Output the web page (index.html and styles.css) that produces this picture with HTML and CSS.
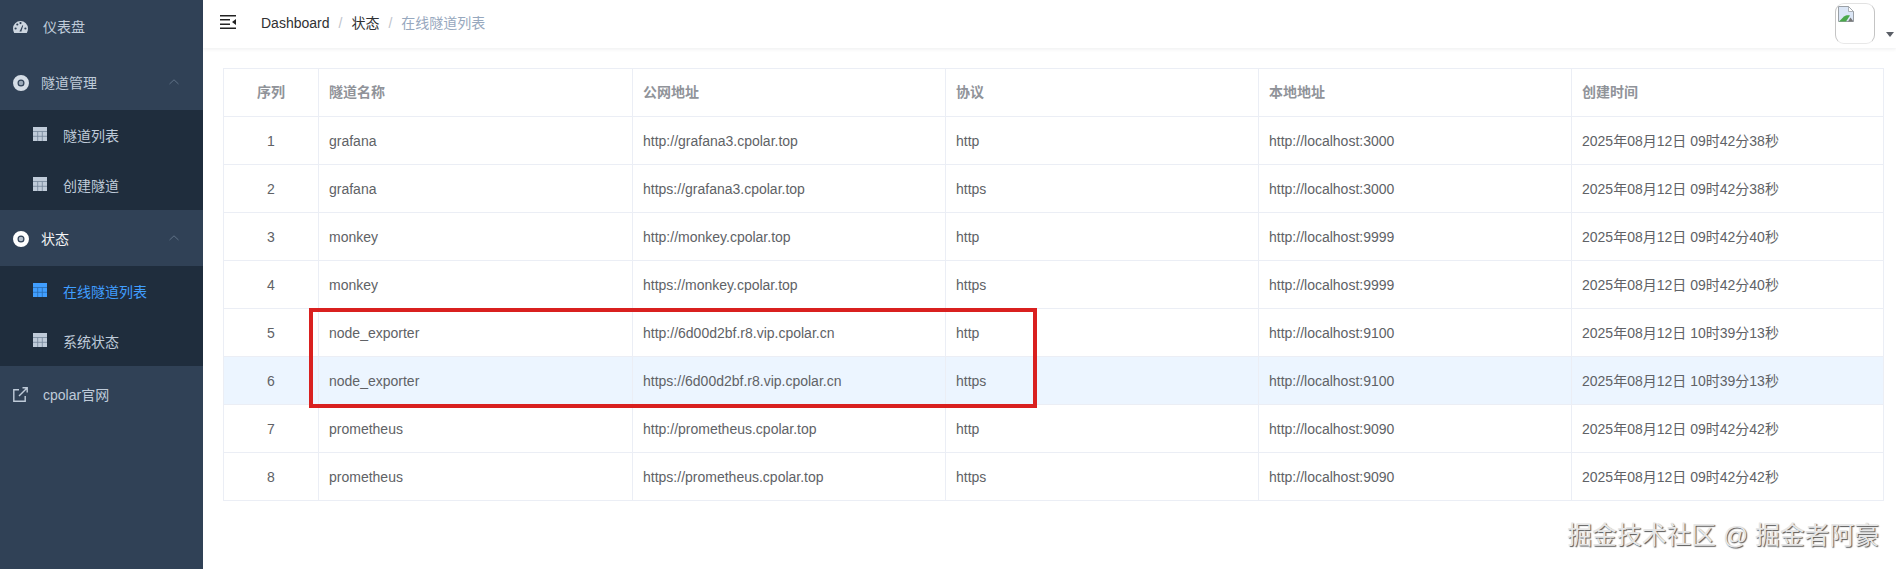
FILE: index.html
```html
<!DOCTYPE html>
<html lang="en">
<head>
    <meta charset="UTF-8">
    <meta name="viewport" content="width=device-width, initial-scale=1.0">
    <title>cpolar</title>
    <link rel="stylesheet" href="styles.css">
</head>
<body>

<div class="app">
    <aside class="sidebar">
        <a class="menu-item menu-first">
            <svg class="menu-icon" viewBox="0 0 15 12"><path fill="#cdd6e0" fill-rule="evenodd" d="M7.500 0A7.500 7.500 0 0 0 0 7.500c0 1.600.4 3.100 1.200 4.500h12.600c.8-1.400 1.200-2.900 1.200-4.500A7.500 7.500 0 0 0 7.500 0zM2.600 8.600a1.100 1.100 0 1 1 0-2.200 1.100 1.100 0 0 1 0 2.200zM4.300 4.600a1.100 1.100 0 1 1 0-2.200 1.100 1.100 0 0 1 0 2.200zM7.500 3.200a1.100 1.100 0 1 1 0-2.200 1.100 1.100 0 0 1 0 2.200zM8.500 10.500h-2c0-.7.300-1.300.8-1.600l2.100-4.700.8.300-1.500 4.800c-.1.400-.2.800-.2 1.200zM12.400 8.600a1.100 1.100 0 1 1 0-2.200 1.100 1.100 0 0 1 0 2.200z"/></svg>
            <span>仪表盘</span>
        </a>
        <a class="menu-item menu-group">
            <svg class="ring-icon" viewBox="0 0 16 16"><path fill="#d5dde6" fill-rule="evenodd" d="M8 0a8 8 0 1 0 0 16A8 8 0 0 0 8 0zM8 4.500a3.500 3.500 0 1 1 0 7 3.500 3.500 0 0 1 0-7z"/><circle cx="8" cy="8" r="2.300" fill="#9aa8b7"/></svg>
            <span>隧道管理</span>
            <svg class="arrow" viewBox="0 0 12 8"><path d="M1.500 6 6 1.800 10.500 6" fill="none" stroke="#5f7186" stroke-width="1"/></svg>
        </a>
        <div class="submenu">
            <a class="sub-item">
                <svg class="grid-icon" viewBox="0 0 14 14"><path fill="#bfcbd9" d="M0 0h14v14H0z"/><path fill="none" stroke="#75869a" stroke-width=".8" d="M0 4.500h14M0 9.300h14M4.700 4.500V14M9.300 4.500V14"/></svg>
                <span>隧道列表</span>
            </a>
            <a class="sub-item">
                <svg class="grid-icon" viewBox="0 0 14 14"><path fill="#bfcbd9" d="M0 0h14v14H0z"/><path fill="none" stroke="#75869a" stroke-width=".8" d="M0 4.500h14M0 9.300h14M4.700 4.500V14M9.300 4.500V14"/></svg>
                <span>创建隧道</span>
            </a>
        </div>
        <a class="menu-item menu-group menu-open">
            <svg class="ring-icon" viewBox="0 0 16 16"><path fill="#fff" fill-rule="evenodd" d="M8 0a8 8 0 1 0 0 16A8 8 0 0 0 8 0zM8 4.500a3.500 3.500 0 1 1 0 7 3.500 3.500 0 0 1 0-7z"/><circle cx="8" cy="8" r="2.300" fill="#b4bec9"/></svg>
            <span>状态</span>
            <svg class="arrow" viewBox="0 0 12 8"><path d="M1.500 6 6 1.800 10.500 6" fill="none" stroke="#5f7186" stroke-width="1"/></svg>
        </a>
        <div class="submenu">
            <a class="sub-item sub-active">
                <svg class="grid-icon" viewBox="0 0 14 14"><path fill="#409eff" d="M0 0h14v14H0z"/><path fill="none" stroke="#2a6cb0" stroke-width=".8" d="M0 4.500h14M0 9.300h14M4.700 4.500V14M9.300 4.500V14"/></svg>
                <span>在线隧道列表</span>
            </a>
            <a class="sub-item">
                <svg class="grid-icon" viewBox="0 0 14 14"><path fill="#bfcbd9" d="M0 0h14v14H0z"/><path fill="none" stroke="#75869a" stroke-width=".8" d="M0 4.500h14M0 9.300h14M4.700 4.500V14M9.300 4.500V14"/></svg>
                <span>系统状态</span>
            </a>
        </div>
        <a class="menu-item">
            <svg class="menu-icon link-icon" viewBox="0 0 15 15"><path fill="none" stroke="#bfcbd9" stroke-width="1.400" d="M6 2.700H.8v11.500h11.400V9M9.500.8h4.700v4.700M13.800 1.200 6 9"/></svg>
            <span>cpolar官网</span>
        </a>
    </aside>

    <div class="main">
        <header class="navbar">
            <svg class="hamburger" viewBox="0 0 16 14"><path fill="#222" d="M0 0h16v1.500H0zM0 4h10v1.500H0zM0 8.500h10V10H0zM0 12.500h16V14H0zM16 4v6l-4-3z"/></svg>
            <nav class="breadcrumb">
                <span class="crumb">Dashboard</span>
                <span class="sep">/</span>
                <span class="crumb">状态</span>
                <span class="sep">/</span>
                <span class="crumb-last">在线隧道列表</span>
            </nav>
            <div class="avatar-wrap">
                <div class="avatar">
                    <svg class="broken" viewBox="0 0 16 16">
                        <path fill="#dbe6f6" stroke="#9aa0a6" stroke-width="1" d="M.5.5h10l5 5v10H.5z"/>
                        <path fill="#fff" stroke="#9aa0a6" stroke-width=".8" d="M10.500.5v5h5z"/>
                        <path fill="#4aa84a" d="M1 15.500 6 10.500c2-1.500 4-1.500 6-1l-4 6z"/>
                        <path fill="#777" d="M12.500 11.500l3 4h-5.500z"/>
                    </svg>
                </div>
                <span class="caret"></span>
            </div>
        </header>

        <section class="content">
            <div class="table-wrap">
                <table class="tunnel-table">
                    <colgroup>
                        <col class="col-id">
                        <col class="col-name">
                        <col class="col-url">
                        <col class="col-proto">
                        <col class="col-local">
                        <col class="col-time">
                    </colgroup>
                    <thead>
                        <tr><th class="center">序列</th><th>隧道名称</th><th>公网地址</th><th>协议</th><th>本地地址</th><th>创建时间</th></tr>
                    </thead>
                    <tbody>
                        <tr><td class="center">1</td><td>grafana</td><td>http://grafana3.cpolar.top</td><td>http</td><td>http://localhost:3000</td><td>2025年08月12日 09时42分38秒</td></tr>
                        <tr><td class="center">2</td><td>grafana</td><td>https://grafana3.cpolar.top</td><td>https</td><td>http://localhost:3000</td><td>2025年08月12日 09时42分38秒</td></tr>
                        <tr><td class="center">3</td><td>monkey</td><td>http://monkey.cpolar.top</td><td>http</td><td>http://localhost:9999</td><td>2025年08月12日 09时42分40秒</td></tr>
                        <tr><td class="center">4</td><td>monkey</td><td>https://monkey.cpolar.top</td><td>https</td><td>http://localhost:9999</td><td>2025年08月12日 09时42分40秒</td></tr>
                        <tr><td class="center">5</td><td>node_exporter</td><td>http://6d00d2bf.r8.vip.cpolar.cn</td><td>http</td><td>http://localhost:9100</td><td>2025年08月12日 10时39分13秒</td></tr>
                        <tr class="row-hover"><td class="center">6</td><td>node_exporter</td><td>https://6d00d2bf.r8.vip.cpolar.cn</td><td>https</td><td>http://localhost:9100</td><td>2025年08月12日 10时39分13秒</td></tr>
                        <tr><td class="center">7</td><td>prometheus</td><td>http://prometheus.cpolar.top</td><td>http</td><td>http://localhost:9090</td><td>2025年08月12日 09时42分42秒</td></tr>
                        <tr><td class="center">8</td><td>prometheus</td><td>https://prometheus.cpolar.top</td><td>https</td><td>http://localhost:9090</td><td>2025年08月12日 09时42分42秒</td></tr>
                    </tbody>
                </table>
                <div class="red-box"></div>
            </div>
        </section>
        <div class="watermark">掘金技术社区 @ 掘金者阿豪</div>
    </div>
</div>

</body>
</html>
```
FILE: styles.css
```css
html, body {
    margin: 0;
    padding: 0;
    height: 100%;
    overflow: hidden;
}
body {
    font-family: "Liberation Sans", "Noto Sans CJK SC", sans-serif;
    font-size: 14px;
    line-height: 20px;
    color: #606266;
    background-color: #fff;
}
.app {
    display: flex;
    height: 569px;
}

/* sidebar */
.sidebar {
    width: 203px;
    flex-shrink: 0;
    background-color: #304156;
    color: #bfcbd9;
}
.menu-item {
    display: flex;
    align-items: center;
    height: 56px;
    padding-left: 13px;
    padding-top: 2px;
    box-sizing: border-box;
}
.menu-first {
    height: 54px;
    padding-top: 0;
}
.menu-icon {
    width: 15px;
    height: 12px;
    margin-right: 15px;
}
.link-icon {
    height: 15px;
    margin-top: -2px;
}
.ring-icon {
    width: 16px;
    height: 16px;
    margin-right: 12px;
}
.menu-open {
    color: #f4f4f5;
}
.arrow {
    width: 12px;
    height: 8px;
    margin-left: auto;
    margin-right: 23px;
    margin-top: -3px;
}
.submenu {
    background-color: #1f2d3d;
}
.sub-item {
    display: flex;
    align-items: center;
    height: 50px;
    padding-left: 33px;
    padding-top: 1px;
    box-sizing: border-box;
}
.grid-icon {
    width: 14px;
    height: 14px;
    margin-right: 16px;
    margin-top: -3px;
}
.sub-active {
    color: #409eff;
}

/* navbar */
.main {
    flex: 1;
    min-width: 0;
    position: relative;
}
.navbar {
    display: flex;
    align-items: center;
    height: 48px;
    padding-left: 17px;
    box-shadow: 0 1px 4px rgba(0, 21, 41, 0.08);
}
.hamburger {
    width: 16px;
    height: 14px;
    margin-top: -4px;
}
.breadcrumb {
    display: flex;
    align-items: center;
    margin-left: 25px;
    margin-top: -2px;
}
.crumb {
    color: #303133;
}
.crumb-last {
    color: #97a8be;
}
.sep {
    color: #c0c4cc;
    margin: 0 9px;
}
.avatar-wrap {
    display: flex;
    align-self: flex-start;
    margin-top: 3px;
    margin-left: auto;
    margin-right: 2px;
    align-items: flex-end;
}
.avatar {
    width: 38px;
    height: 39px;
    border: 1px solid #c4c4c4;
    border-radius: 9px;
    border-top-color: #e2e2e2;
    border-bottom-color: #e8e8e8;
    margin-right: 11px;
}
.broken {
    display: block;
    width: 16px;
    height: 16px;
    margin: 2px 0 0 2px;
}
.caret {
    width: 0;
    height: 0;
    border-left: 4px solid transparent;
    border-right: 4px solid transparent;
    border-top: 5px solid #5a5e66;
    margin-bottom: 7px;
}

/* table */
.content {
    padding: 20px 12px 0 20px;
}
.table-wrap {
    position: relative;
}
.tunnel-table {
    width: 100%;
    table-layout: fixed;
    border-collapse: collapse;
    border: 1px solid #ebeef5;
}
.col-id { width: 95px; }
.col-name { width: 314px; }
.col-url { width: 313px; }
.col-proto { width: 313px; }
.col-local { width: 313px; }
.tunnel-table th,
.tunnel-table td {
    height: 48px;
    padding: 0 10px;
    box-sizing: border-box;
    border: 1px solid #ebeef5;
    text-align: left;
    font-weight: normal;
}
.tunnel-table th {
    color: #909399;
    font-weight: bold;
    padding-bottom: 1px;
}
.tunnel-table .center {
    text-align: center;
}
.row-hover td {
    background-color: #ecf5ff;
}
.red-box {
    position: absolute;
    left: 86px;
    top: 240px;
    width: 720px;
    height: 92px;
    border: 4px solid #d9201f;
}
.watermark {
    position: absolute;
    right: 17px;
    bottom: 16px;
    font-size: 24.8px;
    line-height: 34px;
    color: #e6e6e6;
    text-shadow: 1px 1px 1px #555;
}
```
